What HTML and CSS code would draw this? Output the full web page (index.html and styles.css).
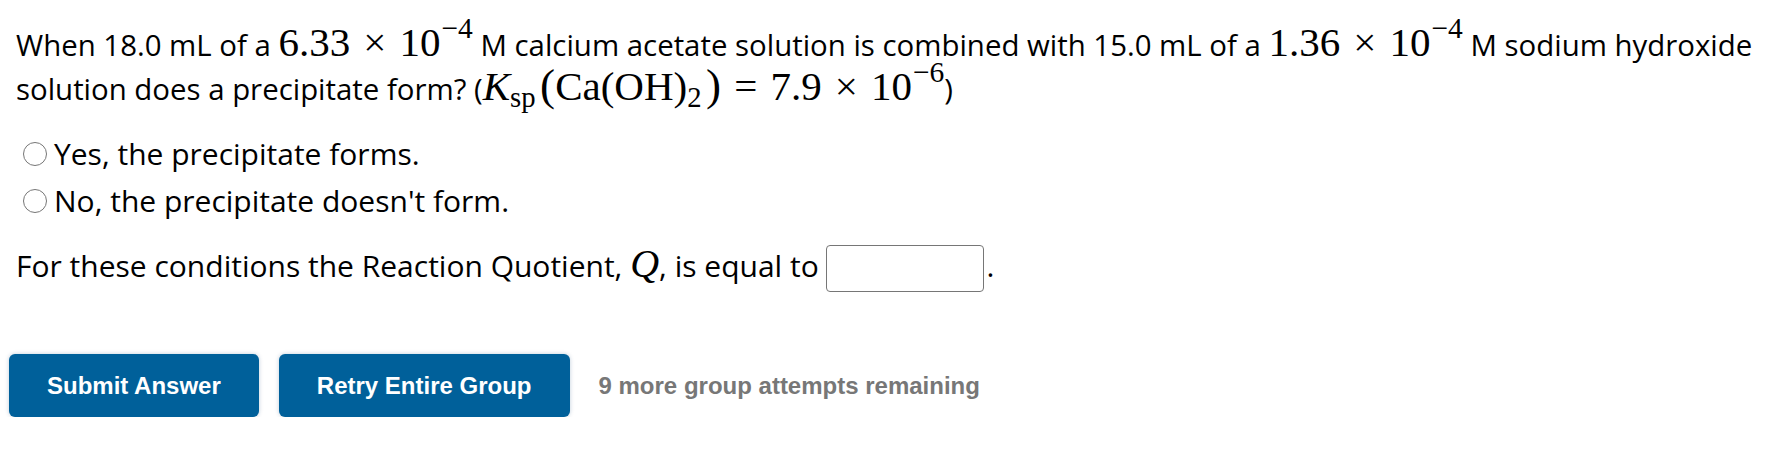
FILE: index.html
```html
<!DOCTYPE html>
<html lang="en">
<head>
<meta charset="utf-8">
<title>Precipitate question</title>
<link rel="stylesheet" href="styles.css">
</head>
<body>
<div class="question-wrap">
  <p class="question">When 18.0 mL of a <span class="math">6.33<span class="bin">×</span>10<span class="sup">−4</span></span> M calcium acetate solution is combined with 15.0 mL of a <span class="math">1.36<span class="bin">×</span>10<span class="sup">−4</span></span> M sodium hydroxide solution does a precipitate form? (<span class="math"><i class="mi">K</i><span class="sub">sp</span><span class="delim">(</span>Ca(OH)<span class="sub">2</span><span class="delim">)</span><span class="rel">=</span>7.9<span class="bin">×</span>10<span class="sup">−6</span></span>)</p>

  <div class="options">
    <label class="option"><span class="radio"></span>Yes, the precipitate forms.</label>
    <label class="option"><span class="radio"></span>No, the precipitate doesn't form.</label>
  </div>

  <p class="q-line">For these conditions the Reaction Quotient, <span class="math q"><i class="mi">Q</i></span>, is equal to <input class="answer" type="text" aria-label="Q">.</p>

  <div class="actions">
    <button class="btn" type="button">Submit Answer</button>
    <button class="btn" type="button">Retry Entire Group</button>
    <span class="attempts">9 more group attempts remaining</span>
  </div>
</div>
</body>
</html>
```

FILE: styles.css
```css
html, body {
  margin: 0;
  padding: 0;
  background: #ffffff;
}

body {
  font-family: "Open Sans", "Noto Sans", sans-serif;
  font-size: 29.4px;
  color: #000000;
}

.question-wrap {
  padding: 23px 0 0 16px;
}

.question {
  margin: 0;
  line-height: 44px;
}

.math {
  font-family: "Liberation Serif", "Times New Roman", serif;
  font-size: 41px;
  line-height: 0;
  white-space: nowrap;
}

.mi {
  font-style: italic;
}

.q {
  margin: 0;
  font-size: 40px;
}

.bin {
  margin: 0 0.32em;
}

.rel {
  margin: 0 0.32em;
}

.sup {
  font-size: 0.72em;
  vertical-align: 0.62em;
  line-height: 0;
  margin-left: 0.03em;
}

.sub {
  font-size: 0.7em;
  vertical-align: -0.24em;
  line-height: 0;
}

.delim {
  font-size: 1.1em;
  margin-left: 0.1em;
}

.options {
  margin-top: 21px;
  display: flex;
  flex-direction: column;
  gap: 3px;
  font-size: 30px;
}

.option {
  display: flex;
  align-items: center;
  line-height: 44px;
}

.radio {
  width: 22px;
  height: 22px;
  border: 1.6px solid #767676;
  border-radius: 50%;
  margin: 0 7px 0 7px;
  flex: none;
}

.q-line {
  margin: 21px 0 0 0;
  line-height: 44px;
  font-size: 30px;
}

.answer {
  width: 158px;
  height: 47px;
  box-sizing: border-box;
  border: 1.8px solid #767676;
  border-radius: 4px;
  margin: 0 2px 0 0;
  padding: 0;
  vertical-align: middle;
  font: inherit;
  background: #fff;
}

.actions {
  margin-top: 62px;
  display: flex;
  align-items: center;
  margin-left: -7px;
}

.btn {
  font-family: "Liberation Sans", Arial, sans-serif;
  font-weight: bold;
  font-size: 24px;
  color: #ffffff;
  background: #00609a;
  border: none;
  border-radius: 6px;
  height: 63px;
  padding: 0 38px;
  margin-right: 20px;
  box-shadow: 0 0 4px rgba(0, 60, 110, 0.25);
  cursor: pointer;
}

.btn + .btn {
  margin-right: 29px;
}

.attempts {
  font-family: "Liberation Sans", Arial, sans-serif;
  font-weight: bold;
  font-size: 24px;
  color: #777777;
}
```
